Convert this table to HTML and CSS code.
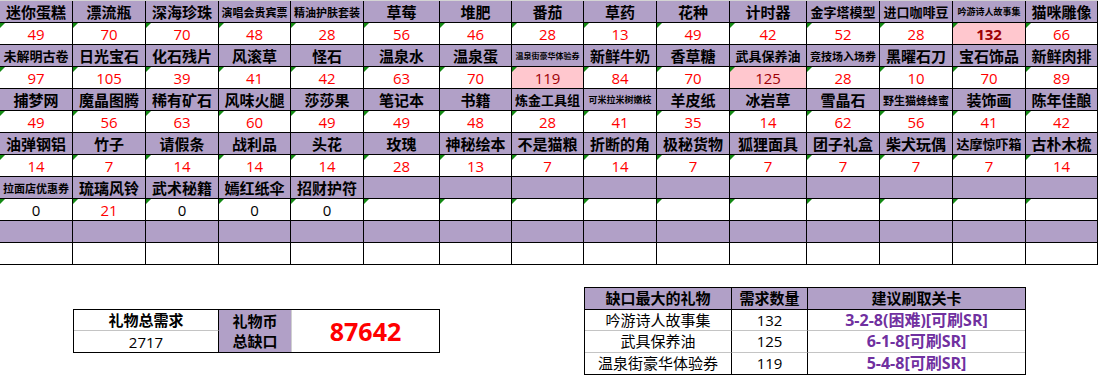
FILE: index.html
```html
<!DOCTYPE html>
<html lang="zh-CN">
<head>
<meta charset="utf-8">
<title>礼物需求表</title>
<link rel="stylesheet" href="styles.css">
</head>
<body>
<div class="sheet">
  <!-- row 1 -->
  <div class="h">迷你蛋糕</div><div class="h">漂流瓶</div><div class="h">深海珍珠</div><div class="h s6">演唱会贵宾票</div><div class="h s6">精油护肤套装</div><div class="h">草莓</div><div class="h">堆肥</div><div class="h">番茄</div><div class="h">草药</div><div class="h">花种</div><div class="h">计时器</div><div class="h s5">金字塔模型</div><div class="h s5">进口咖啡豆</div><div class="h s7">吟游诗人故事集</div><div class="h">猫咪雕像</div>
  <div class="n">49</div><div class="n">70</div><div class="n">70</div><div class="n">48</div><div class="n">28</div><div class="n">56</div><div class="n">46</div><div class="n">28</div><div class="n">13</div><div class="n">49</div><div class="n">42</div><div class="n">52</div><div class="n">28</div><div class="n hl b">132</div><div class="n">66</div>
  <!-- row 2 -->
  <div class="h s5">未解明古卷</div><div class="h">日光宝石</div><div class="h">化石残片</div><div class="h">风滚草</div><div class="h">怪石</div><div class="h">温泉水</div><div class="h">温泉蛋</div><div class="h s8">温泉街豪华体验券</div><div class="h">新鲜牛奶</div><div class="h">香草糖</div><div class="h s5">武具保养油</div><div class="h s6">竞技场入场券</div><div class="h">黑曜石刀</div><div class="h">宝石饰品</div><div class="h">新鲜肉排</div>
  <div class="n">97</div><div class="n">105</div><div class="n">39</div><div class="n">41</div><div class="n">42</div><div class="n">63</div><div class="n">70</div><div class="n hl">119</div><div class="n">84</div><div class="n">70</div><div class="n hl">125</div><div class="n">28</div><div class="n">10</div><div class="n">70</div><div class="n">89</div>
  <!-- row 3 -->
  <div class="h">捕梦网</div><div class="h">魔晶图腾</div><div class="h">稀有矿石</div><div class="h">风味火腿</div><div class="h">莎莎果</div><div class="h">笔记本</div><div class="h">书籍</div><div class="h s5">炼金工具组</div><div class="h s7">可米拉米树嫩枝</div><div class="h">羊皮纸</div><div class="h">冰岩草</div><div class="h">雪晶石</div><div class="h s6">野生猫蜂蜂蜜</div><div class="h">装饰画</div><div class="h">陈年佳酿</div>
  <div class="n">49</div><div class="n">56</div><div class="n">63</div><div class="n">60</div><div class="n">49</div><div class="n">49</div><div class="n">48</div><div class="n">28</div><div class="n">41</div><div class="n">35</div><div class="n">14</div><div class="n">62</div><div class="n">56</div><div class="n">41</div><div class="n">42</div>
  <!-- row 4 -->
  <div class="h">油弹钢铝</div><div class="h">竹子</div><div class="h">请假条</div><div class="h">战利品</div><div class="h">头花</div><div class="h">玫瑰</div><div class="h">神秘绘本</div><div class="h">不是猫粮</div><div class="h">折断的角</div><div class="h">极秘货物</div><div class="h">狐狸面具</div><div class="h">团子礼盒</div><div class="h">柴犬玩偶</div><div class="h s5">达摩惊吓箱</div><div class="h">古朴木梳</div>
  <div class="n">14</div><div class="n">7</div><div class="n">14</div><div class="n">14</div><div class="n">14</div><div class="n">28</div><div class="n">13</div><div class="n">7</div><div class="n">14</div><div class="n">7</div><div class="n">7</div><div class="n">7</div><div class="n">7</div><div class="n">7</div><div class="n">14</div>
  <!-- row 5 -->
  <div class="h s6">拉面店优惠券</div><div class="h">琉璃风铃</div><div class="h">武术秘籍</div><div class="h">嫣红纸伞</div><div class="h">招财护符</div><div class="h"></div><div class="h"></div><div class="h"></div><div class="h"></div><div class="h"></div><div class="h"></div><div class="h"></div><div class="h"></div><div class="h"></div><div class="h"></div>
  <div class="n k">0</div><div class="n">21</div><div class="n k">0</div><div class="n k">0</div><div class="n k">0</div><div class="n"></div><div class="n"></div><div class="n"></div><div class="n"></div><div class="n"></div><div class="n"></div><div class="n"></div><div class="n"></div><div class="n"></div><div class="n"></div>
  <!-- row 6 -->
  <div class="h"></div><div class="h"></div><div class="h"></div><div class="h"></div><div class="h"></div><div class="h"></div><div class="h"></div><div class="h"></div><div class="h"></div><div class="h"></div><div class="h"></div><div class="h"></div><div class="h"></div><div class="h"></div><div class="h"></div>
  <div class="e"></div><div class="e"></div><div class="e"></div><div class="e"></div><div class="e"></div><div class="e"></div><div class="e"></div><div class="e"></div><div class="e"></div><div class="e"></div><div class="e"></div><div class="e"></div><div class="e"></div><div class="e"></div><div class="e"></div>
</div>

<div class="summary">
  <div class="total">
    <div class="t-label">礼物总需求</div>
    <div class="t-coin">礼物币<br>总缺口</div>
    <div class="t-gap">87642</div>
    <div class="t-value">2717</div>
  </div>

  <div class="top">
    <div class="th">缺口最大的礼物</div><div class="th">需求数量</div><div class="th last">建议刷取关卡</div>
    <div class="td">吟游诗人故事集</div><div class="td">132</div><div class="td stage last">3-2-8(困难)[可刷SR]</div>
    <div class="td">武具保养油</div><div class="td">125</div><div class="td stage last">6-1-8[可刷SR]</div>
    <div class="td end">温泉街豪华体验券</div><div class="td end">119</div><div class="td stage last end">5-4-8[可刷SR]</div>
  </div>
</div>
</body>
</html>
```

FILE: styles.css
```css
* { box-sizing: border-box; }

body {
  margin: 0;
  background: #ffffff;
  font-family: "Open Sans", "Noto Sans CJK SC", sans-serif;
  color: #000;
}

.sheet,
.summary {
  display: grid;
  grid-template-columns: 73px 73px 73px 72px 73px 76px 72px 72px 73px 73px 77px 73px 73px 73px 72px;
  width: 1098px;
}

.sheet {
  grid-template-rows: repeat(12, 22px);
  border-top: 1px solid #d4d4d4;
}

.h, .n, .e {
  position: relative;
  display: flex;
  align-items: center;
  justify-content: center;
  border-right: 1px solid #000;
  border-bottom: 1px solid #000;
  white-space: nowrap;
  overflow: hidden;
  line-height: 20px;
}

.h {
  background: #b1a0c7;
  font-family: "Noto Sans CJK SC", sans-serif;
  font-weight: 700;
  font-size: 15px;
  padding-top: 1px;
}

.h.s5 { font-size: 13px; }
.h.s6 { font-size: 11px; }
.h.s7 { font-size: 9px; }
.h.s8 { font-size: 8px; }

.n, .e { background: #fff; }

.n {
  font-size: 15px;
  color: #ff0000;
  padding-top: 1px;
}

.n::before {
  content: "";
  position: absolute;
  top: 0;
  left: 0;
  border-top: 5px solid #138a13;
  border-right: 5px solid transparent;
}

.n.hl {
  background: #ffc7ce;
  color: #9c0006;
}

.n.b { font-weight: 700; }
.n.k { color: #000; }

/* ---------- summary area ---------- */
.summary {
  grid-template-rows: repeat(4, 22px);
  margin-top: 22px;
}

.total {
  grid-column: 2 / 7;
  grid-row: 2 / 4;
  display: grid;
  grid-template-columns: 145px 73px 1fr;
  grid-template-rows: minmax(0, 1fr) minmax(0, 1fr);
  border: 1px solid #000;
}

.t-label, .t-value, .t-coin, .t-gap {
  display: flex;
  align-items: center;
  justify-content: center;
  line-height: 20px;
}

.t-label {
  grid-column: 1;
  grid-row: 1;
  font-family: "Noto Sans CJK SC", sans-serif;
  font-weight: 700;
  font-size: 15px;
  border-bottom: 1px solid #c4c4c4;
  border-right: 1px solid #000;
}

.t-value {
  grid-column: 1;
  grid-row: 2;
  font-size: 15px;
  border-right: 1px solid #000;
}

.t-coin {
  grid-column: 2;
  grid-row: 1 / 3;
  background: #b1a0c7;
  font-family: "Noto Sans CJK SC", sans-serif;
  font-weight: 700;
  font-size: 15px;
  line-height: 20px;
  text-align: center;
  border-right: 1px solid #d0d0d0;
}

.t-gap {
  grid-column: 3;
  grid-row: 1 / 3;
  color: #ff0000;
  font-weight: 700;
  font-size: 25px;
  line-height: 30px;
}

.top {
  grid-column: 9 / 15;
  grid-row: 1 / 5;
  display: grid;
  grid-template-columns: 147px 76px 1fr;
  grid-template-rows: repeat(4, minmax(0, 1fr));
  border: 1px solid #000;
}

.th, .td {
  display: flex;
  align-items: center;
  justify-content: center;
  font-size: 15px;
  line-height: 20px;
  white-space: nowrap;
  border-right: 1px solid #000;
  overflow: hidden;
}

.th {
  background: #b1a0c7;
  font-family: "Noto Sans CJK SC", sans-serif;
  font-weight: 700;
  border-bottom: 1px solid #000;
}

.td {
  border-bottom: 1px solid #c4c4c4;
  font-family: "Open Sans", "Noto Sans CJK SC", sans-serif;
}

.td.end { border-bottom: none; }
.th.last, .td.last { border-right: none; }

.td.stage {
  color: #7030a0;
  font-weight: 700;
  font-size: 16px;
}
```
